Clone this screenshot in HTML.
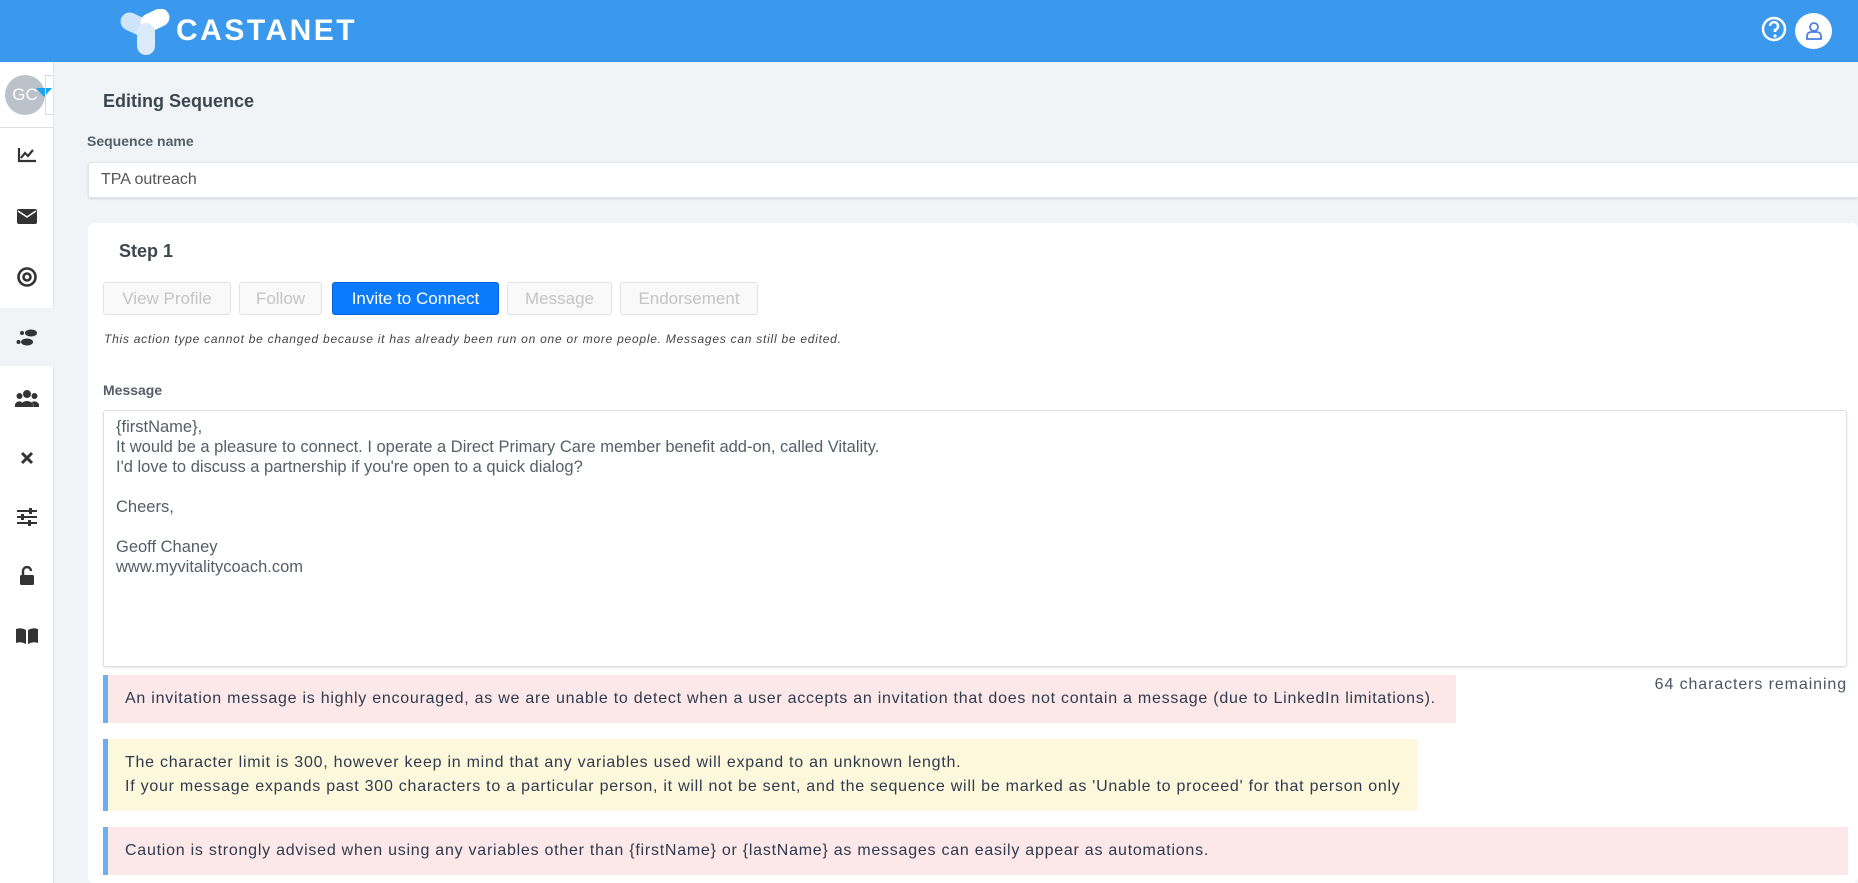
<!DOCTYPE html>
<html><head><meta charset="utf-8"><style>
*{box-sizing:border-box;margin:0;padding:0}
body{width:1858px;height:883px;overflow:hidden;background:#f0f4f7;font-family:"Liberation Sans",sans-serif;position:relative;color:#444}
.hdr{position:absolute;left:0;top:0;width:1858px;height:62px;background:#3a99ec}
.logo{position:absolute;left:176px;top:14px;color:#fff;font-size:30px;font-weight:bold;letter-spacing:2.5px}
.side{position:absolute;left:0;top:62px;width:54px;height:821px;background:#fff;border-right:1px solid #e3e6ea}
.av{position:absolute;left:5px;top:13px;width:40px;height:40px;border-radius:50%;background:#bcc2c9;color:#fff;font-size:17px;text-align:center;line-height:40px}
.abs{position:absolute}
.card{position:absolute;left:88px;top:223px;width:1770px;height:660px;background:#fff;border-radius:6px}
.btn{position:absolute;top:282px;height:33px;border:1px solid #e2e2e2;border-radius:3px;background:#f9f9f9;color:#c4c4c4;font-size:17px;line-height:31px;text-align:center}
.al{position:absolute;left:103px;border-left:5px solid #6ab0ef;font-size:16px;letter-spacing:.75px;color:#2e3b4e;padding-left:17px;white-space:nowrap}
</style></head><body>
<div class="hdr">
<svg class="abs" style="left:120px;top:9px" width="52" height="46" viewBox="0 0 52 46"><rect x="0" y="6" width="30" height="18" rx="9" fill="#cfe4fa" transform="rotate(25 15 15)"/><rect x="20" y="2" width="30" height="18" rx="9" fill="#fff" transform="rotate(-25 35 11)"/><rect x="17" y="14" width="18" height="32" rx="9" fill="#dcebfb"/></svg>
<div class="logo">CASTANET</div>
<svg class="abs" style="left:1761px;top:16px" width="26" height="26" viewBox="0 0 26 26"><circle cx="13" cy="13" r="11" fill="none" stroke="#fff" stroke-width="2.5"/><path d="M9 10a4 4 0 1 1 5 4v2" fill="none" stroke="#fff" stroke-width="2.6"/><circle cx="14" cy="20" r="1.6" fill="#fff"/></svg>
<div class="abs" style="left:1795px;top:13px;width:37px;height:36px;border-radius:50%;background:#fff"></div>
<svg class="abs" style="left:1803px;top:20px" width="22" height="22" viewBox="0 0 22 22"><circle cx="11" cy="7" r="4" fill="none" stroke="#4a7fe0" stroke-width="1.8"/><path d="M4 19v-3a4 4 0 0 1 4-4h6a4 4 0 0 1 4 4v3z" fill="none" stroke="#4a7fe0" stroke-width="1.8"/></svg>
</div>
<div class="side">
<div class="av">GC</div>
<div class="abs" style="left:36px;top:26px;width:0;height:0;border-left:8px solid transparent;border-right:8px solid transparent;border-top:9px solid #1ea3ef"></div>
<div class="abs" style="left:45px;top:13px;width:9px;height:40px;border:1px solid #ddd;border-right:0"></div>
<div class="abs" style="left:0;top:65px;width:54px;height:1px;background:#ddd"></div>
<div class="abs" style="left:0;top:246px;width:54px;height:58px;background:#f0f4f7"></div>
<svg class="abs" style="left:17px;top:85px" width="20" height="16" viewBox="0 0 20 16"><path d="M2 1v13h17M4 11l4-5 3 3 5-6" fill="none" stroke="#333" stroke-width="2.2"/></svg>
<svg class="abs" style="left:17px;top:147px" width="20" height="15" viewBox="0 0 20 15"><rect x="0" y="0" width="20" height="15" rx="2" fill="#333"/><path d="M1 2l9 6 9-6" fill="none" stroke="#fff" stroke-width="1.5"/></svg>
<svg class="abs" style="left:16px;top:204px" width="22" height="22" viewBox="0 0 22 22"><circle cx="11" cy="11" r="8.5" fill="none" stroke="#333" stroke-width="2.6"/><circle cx="11" cy="11" r="3.5" fill="none" stroke="#333" stroke-width="2.6"/></svg>
<svg class="abs" style="left:16px;top:266px" width="24" height="20" viewBox="0 0 24 20"><ellipse cx="15" cy="5" rx="6" ry="3.5" fill="#333"/><ellipse cx="11" cy="14" rx="6" ry="3.5" fill="#333"/><circle cx="6" cy="5" r="2" fill="#333"/><circle cx="2.5" cy="14" r="2" fill="#333"/></svg>
<svg class="abs" style="left:15px;top:327px" width="24" height="18" viewBox="0 0 24 18"><circle cx="12" cy="5" r="4" fill="#333"/><circle cx="4.5" cy="7" r="3" fill="#333"/><circle cx="19.5" cy="7" r="3" fill="#333"/><path d="M5 18a7 6 0 0 1 14 0zM0 16a4.5 4 0 0 1 7-3l-2 5H0zM24 16a4.5 4 0 0 0-7-3l2 5h5z" fill="#333"/></svg>
<svg class="abs" style="left:20px;top:389px" width="14" height="14" viewBox="0 0 14 14"><path d="M2 2l10 10M12 2L2 12" stroke="#333" stroke-width="3"/></svg>
<svg class="abs" style="left:17px;top:446px" width="20" height="18" viewBox="0 0 20 18"><path d="M0 3h20M0 9h20M0 15h20" stroke="#333" stroke-width="2"/><rect x="12" y="0" width="3" height="6" fill="#333"/><rect x="4" y="6" width="3" height="6" fill="#333"/><rect x="11" y="12" width="3" height="6" fill="#333"/></svg>
<svg class="abs" style="left:19px;top:504px" width="16" height="20" viewBox="0 0 16 20"><path d="M4 9V5a4 4 0 0 1 8 0" fill="none" stroke="#333" stroke-width="2.4"/><rect x="1" y="9" width="14" height="10" rx="1.5" fill="#333"/></svg>
<svg class="abs" style="left:16px;top:566px" width="22" height="16" viewBox="0 0 22 16"><path d="M0 1q5-2 10 1v14q-5-3-10-1zM22 1q-5-2-10 1v14q5-3 10-1z" fill="#333"/></svg>
</div>
<div class="abs" style="left:103px;top:91px;font-size:18px;font-weight:bold;color:#3d4650">Editing Sequence</div>
<div class="abs" style="left:87px;top:133px;font-size:14px;font-weight:bold;color:#555e68">Sequence name</div>
<div class="abs" style="left:88px;top:162px;width:1770px;height:36px;background:#fff;border:1px solid #e1e4e8;border-right:0;border-radius:3px 0 0 3px;box-shadow:0 1px 2px rgba(0,0,0,.12);font-size:16px;line-height:34px;padding-left:12px;color:#555">TPA outreach</div>
<div class="card"></div>
<div class="abs" style="left:119px;top:241px;font-size:18px;font-weight:bold;color:#3d4650">Step 1</div>
<div class="btn" style="left:103px;width:128px">View Profile</div>
<div class="btn" style="left:239px;width:83px">Follow</div>
<div class="btn" style="left:332px;width:167px;background:#0a7bfd;border-color:#0660d6;color:#fff">Invite to Connect</div>
<div class="btn" style="left:507px;width:105px">Message</div>
<div class="btn" style="left:620px;width:138px">Endorsement</div>
<div class="abs" style="left:104px;top:332px;font-size:12px;font-style:italic;letter-spacing:.75px;color:#444">This action type cannot be changed because it has already been run on one or more people. Messages can still be edited.</div>
<div class="abs" style="left:103px;top:382px;font-size:14px;font-weight:bold;color:#555e68">Message</div>
<div class="abs" style="left:103px;top:410px;width:1744px;height:257px;border:1px solid #dcdfe3;border-radius:3px;box-shadow:0 1px 2px rgba(0,0,0,.1);padding:6px 12px;font-size:16.5px;line-height:20px;color:#555e68;white-space:pre">{firstName},
It would be a pleasure to connect. I operate a Direct Primary Care member benefit add-on, called Vitality.
I'd love to discuss a partnership if you're open to a quick dialog?

Cheers,

Geoff Chaney
www.myvitalitycoach.com</div>
<div class="abs" style="left:1600px;top:676px;width:247px;text-align:right;font-size:16px;letter-spacing:.9px;color:#4b5563">64 characters remaining</div>
<div class="al" style="top:675px;width:1353px;height:48px;background:#fce8e8;line-height:48px">An invitation message is highly encouraged, as we are unable to detect when a user accepts an invitation that does not contain a message (due to LinkedIn limitations).</div>
<div class="al" style="top:739px;width:1314px;height:72px;background:#fdf8dc;line-height:24px;padding-top:12px">The character limit is 300, however keep in mind that any variables used will expand to an unknown length.<br>If your message expands past 300 characters to a particular person, it will not be sent, and the sequence will be marked as 'Unable to proceed' for that person only</div>
<div class="al" style="top:827px;width:1745px;height:48px;background:#fce8e8;line-height:48px">Caution is strongly advised when using any variables other than {firstName} or {lastName} as messages can easily appear as automations.</div>
</body></html>
